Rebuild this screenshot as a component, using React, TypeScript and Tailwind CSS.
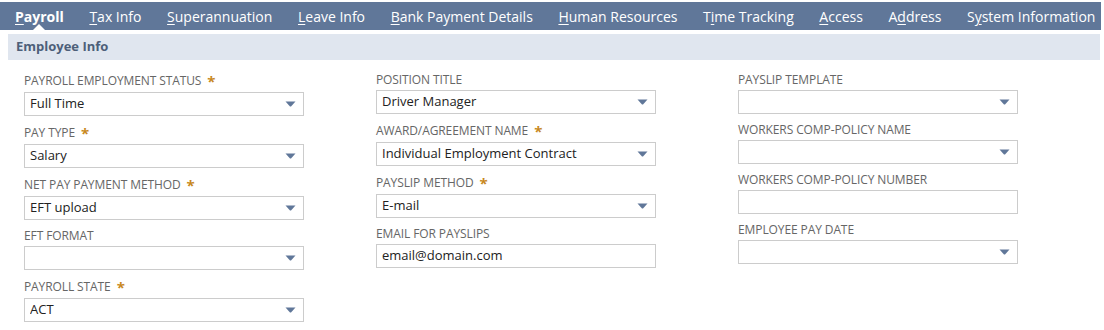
import React from 'react'

type Field = { label: string; value?: string; required?: boolean; select?: boolean }

const tabs: { pre: string; key: string; post: string; active?: boolean }[] = [
  { pre: '', key: 'P', post: 'ayroll', active: true },
  { pre: '', key: 'T', post: 'ax Info' },
  { pre: '', key: 'S', post: 'uperannuation' },
  { pre: '', key: 'L', post: 'eave Info' },
  { pre: '', key: 'B', post: 'ank Payment Details' },
  { pre: '', key: 'H', post: 'uman Resources' },
  { pre: 'T', key: 'i', post: 'me Tracking' },
  { pre: '', key: 'A', post: 'ccess' },
  { pre: 'A', key: 'd', post: 'dress' },
  { pre: 'S', key: 'y', post: 'stem Information' },
]

const columns: Field[][] = [
  [
    { label: 'PAYROLL EMPLOYMENT STATUS', value: 'Full Time', required: true, select: true },
    { label: 'PAY TYPE', value: 'Salary', required: true, select: true },
    { label: 'NET PAY PAYMENT METHOD', value: 'EFT upload', required: true, select: true },
    { label: 'EFT FORMAT', select: true },
    { label: 'PAYROLL STATE', value: 'ACT', required: true, select: true },
  ],
  [
    { label: 'POSITION TITLE', value: 'Driver Manager', select: true },
    { label: 'AWARD/AGREEMENT NAME', value: 'Individual Employment Contract', required: true, select: true },
    { label: 'PAYSLIP METHOD', value: 'E-mail', required: true, select: true },
    { label: 'EMAIL FOR PAYSLIPS', value: 'email@domain.com' },
  ],
  [
    { label: 'PAYSLIP TEMPLATE', select: true },
    { label: 'WORKERS COMP-POLICY NAME', select: true },
    { label: 'WORKERS COMP-POLICY NUMBER' },
    { label: 'EMPLOYEE PAY DATE', select: true },
  ],
]

function FormField({ label, value, required, select }: Field) {
  return (
    <div className="mb-[8px]">
      <div className="flex items-center h-[16px] data-[req=true]:h-[18px] text-[12px] text-[#666] tracking-[-0.1px]" data-req={required ? 'true' : 'false'}>
        {label}
        {required && <span className="ml-[6px] text-[15px] leading-[18px] text-[#c8891f] font-bold">*</span>}
      </div>
      <div className="mt-[2px] h-[24px] w-[280px] border border-[#cccccc] bg-white flex items-center pl-[5px] pr-[7px] text-[13px] text-[#222]">
        <span className="flex-1 truncate">{value}</span>
        {select && (
          <svg width="11" height="6" viewBox="0 0 11 6" className="shrink-0">
            <path d="M0.5 0.5 H10.5 L6 5.5 H5 Z" fill="#607799" />
          </svg>
        )}
      </div>
    </div>
  )
}

export default function App() {
  return (
    <div className="w-[1104px] h-[330px] bg-white font-['Open_Sans',sans-serif] pt-[2px]">
      {/* Tabs */}
      <div className="relative w-[1101px] h-[28px] bg-[#607799] flex items-center gap-[25.6px] pl-[15px] text-[14px] text-white whitespace-nowrap">
        {tabs.map((t, i) => (
          <span key={i} className={t.active ? 'font-bold' : ''}>
            {t.pre}
            <u className="underline-offset-[2px]">{t.key}</u>
            {t.post}
          </span>
        ))}
        <svg width="12" height="6" viewBox="0 0 12 6" className="absolute left-[33px] bottom-0">
          <path d="M0 6 L6 0 L12 6 Z" fill="#ffffff" />
        </svg>
      </div>

      {/* Section header */}
      <div className="ml-[8px] mt-[4px] w-[1092px] h-[26px] bg-[#e0e6ef] flex items-center pl-[8px] text-[13px] font-bold text-[#4d5f79]">
        Employee Info
      </div>

      {/* Fields */}
      <div className="flex pl-[24px] pt-[12px]">
        <div className="w-[280px]">
          {columns[0].map((f) => <FormField key={f.label} {...f} />)}
        </div>
        <div className="w-[280px] ml-[72px]">
          {columns[1].map((f) => <FormField key={f.label} {...f} />)}
        </div>
        <div className="w-[280px] ml-[82px]">
          {columns[2].map((f) => <FormField key={f.label} {...f} />)}
        </div>
      </div>
    </div>
  )
}
